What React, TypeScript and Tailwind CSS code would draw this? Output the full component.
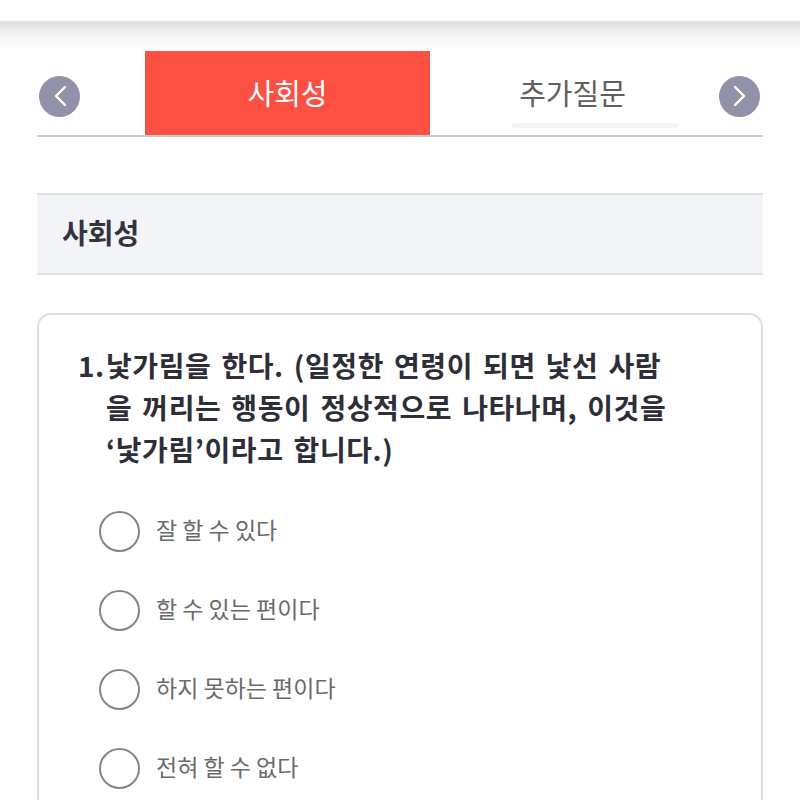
import React from "react";

const font = { fontFamily: '"Noto Sans CJK KR", "Noto Sans", sans-serif' };

function Radio({ label }: { label: string }) {
  return (
    <div className="flex items-center h-[79px]">
      <div className="w-[41px] h-[41px] rounded-full border-2 border-[#858585] bg-white shrink-0" />
      <span className="ml-[16px] text-[23px] text-[#6a6a6a] leading-none -mt-[4px]">{label}</span>
    </div>
  );
}

export default function App() {
  return (
    <div className="w-[800px] h-[800px] bg-white overflow-hidden" style={font}>
      <div className="h-[21px] bg-white" />
      <div className="h-[30px] bg-gradient-to-b from-[#dedede] via-[#f6f6f6] to-white" />
      <div className="mx-[37px] w-[726px]">
        <div className="flex items-stretch h-[86px] border-b-2 border-[#c6ccd6]">
          <div className="w-[108px] flex items-center pl-[2px]">
            <div className="mt-[6px] w-[41px] h-[41px] rounded-full bg-[#9191a9] flex items-center justify-center">
              <svg width="16" height="22" viewBox="0 0 16 22" fill="none">
                <path d="M13 2 L4 11 L13 20" stroke="white" strokeWidth="2.4" strokeLinecap="round" strokeLinejoin="round" />
              </svg>
            </div>
          </div>
          <div className="w-[285px] bg-[#fc5043] flex items-center justify-center">
            <span className="text-white text-[29px] leading-none -mt-[2px]">사회성</span>
          </div>
          <div className="w-[285px] relative flex items-center justify-center">
            <span className="text-[#606060] text-[29px] leading-none -mt-[2px]">추가질문</span>
            <div className="absolute left-[82px] top-[72px] w-[167px] h-[5px] rounded-full bg-[#f4f4f6]" />
          </div>
          <div className="flex-1 flex items-center justify-end pr-[3px]">
            <div className="mt-[6px] w-[41px] h-[41px] rounded-full bg-[#9191a9] flex items-center justify-center">
              <svg width="16" height="22" viewBox="0 0 16 22" fill="none">
                <path d="M3 2 L12 11 L3 20" stroke="white" strokeWidth="2.4" strokeLinecap="round" strokeLinejoin="round" />
              </svg>
            </div>
          </div>
        </div>

        <div className="mt-[56px] h-[82px] bg-[#f3f4f8] border-y-2 border-[#dcdfe5] flex items-center pl-[25px]">
          <span className="text-[28px] font-bold text-[#33333d] leading-none -mt-[4px]">사회성</span>
        </div>

        <div className="mt-[38px] border-2 border-[#dcdfe5] rounded-[14px] pl-[39px] pt-[29px] pb-[40px]">
          <div className="flex text-[28px] font-bold text-[#2e2e38] leading-[42px] tracking-[0.6px] [word-spacing:3px] whitespace-nowrap">
            <span className="w-[28px] shrink-0">1.</span>
            <span>
              낯가림을 한다. (일정한 연령이 되면 낯선 사람
              <br />
              을 꺼리는 행동이 정상적으로 나타나며, 이것을
              <br />
              ‘낯가림’이라고 합니다.)
            </span>
          </div>
          <div className="mt-[22px] pl-[21px]">
            <Radio label="잘 할 수 있다" />
            <Radio label="할 수 있는 편이다" />
            <Radio label="하지 못하는 편이다" />
            <Radio label="전혀 할 수 없다" />
          </div>
        </div>
      </div>
    </div>
  );
}
